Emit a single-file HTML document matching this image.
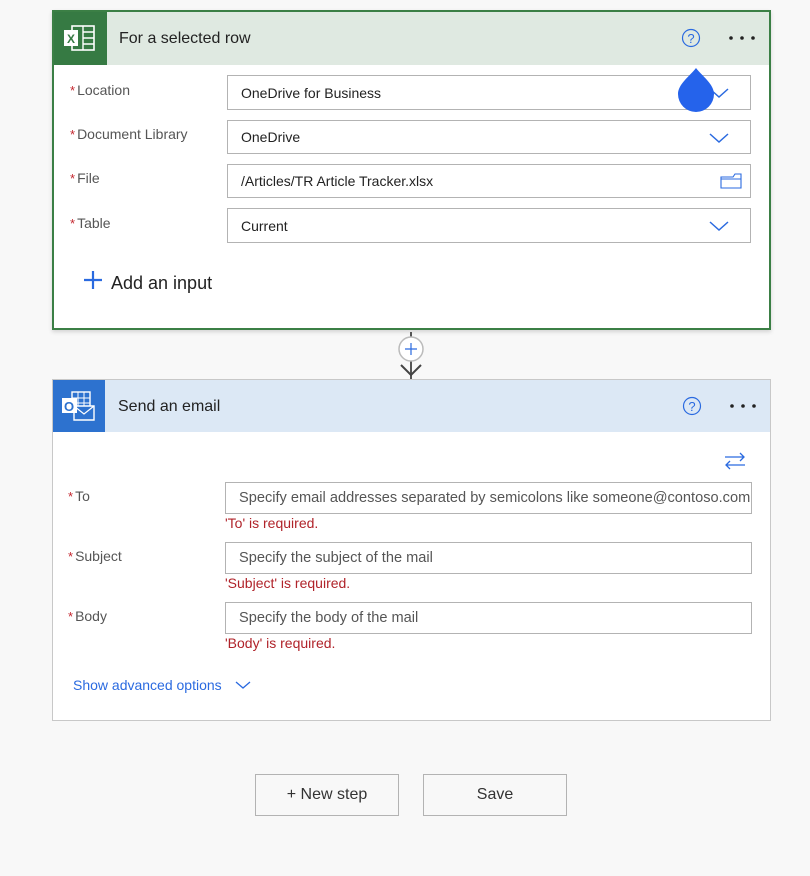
<!DOCTYPE html><html><head><style>
body{margin:0;width:810px;height:876px;background:#f8f8f8;font-family:"Liberation Sans",sans-serif;position:relative;overflow:hidden}
.a{position:absolute}
.card{position:absolute;background:#fff;box-sizing:border-box}
.lbl{position:absolute;font-size:14px;color:#555}
.lbl b{color:#c4262e;font-weight:normal;font-size:13px;margin-right:2px}
.inp{position:absolute;box-sizing:border-box;border:1px solid #b3b3b3;background:#fff;font-size:14px;color:#222;padding-left:13px;display:flex;align-items:center;white-space:nowrap;overflow:hidden}
.ph{color:#555;font-size:14.6px}
.err{position:absolute;font-size:14px;color:#b0232a}
.btn{position:absolute;box-sizing:border-box;border:1px solid #b3b3b3;background:#f8f8f8;font-size:16px;color:#333;display:flex;align-items:center;justify-content:center}
</style></head><body>
<div class="card" style="left:52px;top:10px;width:719px;height:320px;border:2px solid #3b7f45;box-shadow:0 2px 4px rgba(0,0,0,.15)"></div>
<div class="a" style="left:54px;top:12px;width:715px;height:53px;background:#dfe9e1"></div>
<div class="a" style="left:54px;top:12px;width:53px;height:53px;background:#367a43"></div>
<svg class="a" style="left:62px;top:24px" width="36" height="30" viewBox="0 0 36 30"><rect x="10" y="2" width="22" height="24" fill="none" stroke="#fff" stroke-width="1.6"/><path d="M21 2v24M21 8h11M21 14h11M21 20h11" stroke="#fff" stroke-width="1.4"/><rect x="2" y="6" width="14" height="16" fill="#fff"/><text x="5" y="19" font-size="12" font-family="Liberation Sans" font-weight="bold" fill="#367a43">X</text></svg>
<div class="a" style="left:119px;top:30px;font-size:16px;color:#222">For a selected row</div>
<svg class="a" style="left:681px;top:28px" width="20" height="20"><circle cx="10" cy="10" r="8.5" fill="none" stroke="#2a6ae0" stroke-width="1.2"/><text x="10" y="15" font-size="13" text-anchor="middle" fill="#2a6ae0" font-family="Liberation Sans">?</text></svg>
<svg class="a" style="left:728px;top:35px" width="28" height="6"><circle cx="3" cy="3" r="1.8" fill="#222"/><circle cx="14" cy="3" r="1.8" fill="#222"/><circle cx="25" cy="3" r="1.8" fill="#222"/></svg>
<div class="lbl" style="left:70px;top:82px"><b>*</b>Location</div>
<div class="lbl" style="left:70px;top:126px"><b>*</b>Document Library</div>
<div class="lbl" style="left:70px;top:170px"><b>*</b>File</div>
<div class="lbl" style="left:70px;top:215px"><b>*</b>Table</div>
<div class="inp" style="left:227px;top:75px;width:524px;height:35px">OneDrive for Business</div>
<div class="inp" style="left:227px;top:120px;width:524px;height:34px">OneDrive</div>
<div class="inp" style="left:227px;top:164px;width:524px;height:34px">/Articles/TR Article Tracker.xlsx</div>
<div class="inp" style="left:227px;top:208px;width:524px;height:35px">Current</div>
<svg class="a" style="left:708px;top:86px" width="22" height="14"><path d="M2 3l9 8 9-8" fill="none" stroke="#2a6ae0" stroke-width="1.5"/></svg>
<svg class="a" style="left:708px;top:131px" width="22" height="14"><path d="M2 3l9 8 9-8" fill="none" stroke="#2a6ae0" stroke-width="1.5"/></svg>
<svg class="a" style="left:708px;top:219px" width="22" height="14"><path d="M2 3l9 8 9-8" fill="none" stroke="#2a6ae0" stroke-width="1.5"/></svg>
<svg class="a" style="left:720px;top:173px" width="22" height="16"><path d="M1 4h12l2-3h6v14H1z" fill="none" stroke="#2a6ae0" stroke-width="1.1"/><path d="M1 6h20" stroke="#2a6ae0" stroke-width="1"/></svg>
<svg class="a" style="left:676px;top:66px" width="40" height="48"><path d="M20 2 C14 10 2 18 2 28 a18 18 0 0 0 36 0 C38 18 26 10 20 2z" fill="#2563eb"/></svg>
<svg class="a" style="left:83px;top:270px" width="20" height="20"><path d="M10 1v18M1 10h18" stroke="#2a6ae0" stroke-width="2.2"/></svg>
<div class="a" style="left:111px;top:273px;font-size:18px;color:#222">Add an input</div>
<div class="a" style="left:410px;top:332px;width:2px;height:50px;background:#555"></div>
<svg class="a" style="left:396px;top:336px" width="30" height="44"><circle cx="15" cy="13" r="12" fill="#fff" stroke="#bbb" stroke-width="1.5"/><path d="M15 7v12M9 13h12" stroke="#2a6ae0" stroke-width="1.2"/><path d="M5 29l10 10 10-10" fill="none" stroke="#444" stroke-width="2"/></svg>
<div class="card" style="left:52px;top:379px;width:719px;height:342px;border:1px solid #c8c8c8"></div>
<div class="a" style="left:53px;top:380px;width:717px;height:52px;background:#dce8f5"></div>
<div class="a" style="left:53px;top:380px;width:52px;height:52px;background:#2d72cf"></div>
<svg class="a" style="left:60px;top:390px" width="38" height="32" viewBox="0 0 38 32"><rect x="12" y="2" width="18" height="16" fill="none" stroke="#fff" stroke-width="1.4"/><path d="M18 2v16M24 2v16M12 8h18M12 13h18" stroke="#fff" stroke-width="1"/><path d="M14 16h20v14H14z" fill="#2d72cf" stroke="#fff" stroke-width="1.4"/><path d="M14 16l10 8 10-8" fill="none" stroke="#fff" stroke-width="1.2"/><rect x="2" y="8" width="15" height="15" fill="#fff"/><text x="4" y="21" font-size="13" font-weight="bold" fill="#2d72cf" font-family="Liberation Sans">O</text></svg>
<div class="a" style="left:118px;top:398px;font-size:16px;color:#222">Send an email</div>
<svg class="a" style="left:682px;top:396px" width="20" height="20"><circle cx="10" cy="10" r="8.5" fill="none" stroke="#2a6ae0" stroke-width="1.2"/><text x="10" y="15" font-size="13" text-anchor="middle" fill="#2a6ae0" font-family="Liberation Sans">?</text></svg>
<svg class="a" style="left:729px;top:403px" width="28" height="6"><circle cx="3" cy="3" r="1.8" fill="#222"/><circle cx="14" cy="3" r="1.8" fill="#222"/><circle cx="25" cy="3" r="1.8" fill="#222"/></svg>
<svg class="a" style="left:723px;top:451px" width="24" height="20"><path d="M2 6h19M17 2l4 4-4 4M22 14H3M7 10l-4 4 4 4" fill="none" stroke="#2a6ae0" stroke-width="1.3"/></svg>
<div class="lbl" style="left:68px;top:488px"><b>*</b>To</div>
<div class="lbl" style="left:68px;top:548px"><b>*</b>Subject</div>
<div class="lbl" style="left:68px;top:608px"><b>*</b>Body</div>
<div class="inp ph" style="left:225px;top:482px;width:527px;height:32px">Specify email addresses separated by semicolons like someone@contoso.com</div>
<div class="inp ph" style="left:225px;top:542px;width:527px;height:32px">Specify the subject of the mail</div>
<div class="inp ph" style="left:225px;top:602px;width:527px;height:32px">Specify the body of the mail</div>
<div class="err" style="left:225px;top:515px">'To' is required.</div>
<div class="err" style="left:225px;top:575px">'Subject' is required.</div>
<div class="err" style="left:225px;top:635px">'Body' is required.</div>
<div class="a" style="left:73px;top:677px;font-size:14px;color:#2a6ae0">Show advanced options</div>
<svg class="a" style="left:234px;top:679px" width="18" height="12"><path d="M2 3l7 6 7-6" fill="none" stroke="#2a6ae0" stroke-width="1.3"/></svg>
<div class="btn" style="left:255px;top:774px;width:144px;height:42px">+ New step</div>
<div class="btn" style="left:423px;top:774px;width:144px;height:42px">Save</div>
</body></html>
